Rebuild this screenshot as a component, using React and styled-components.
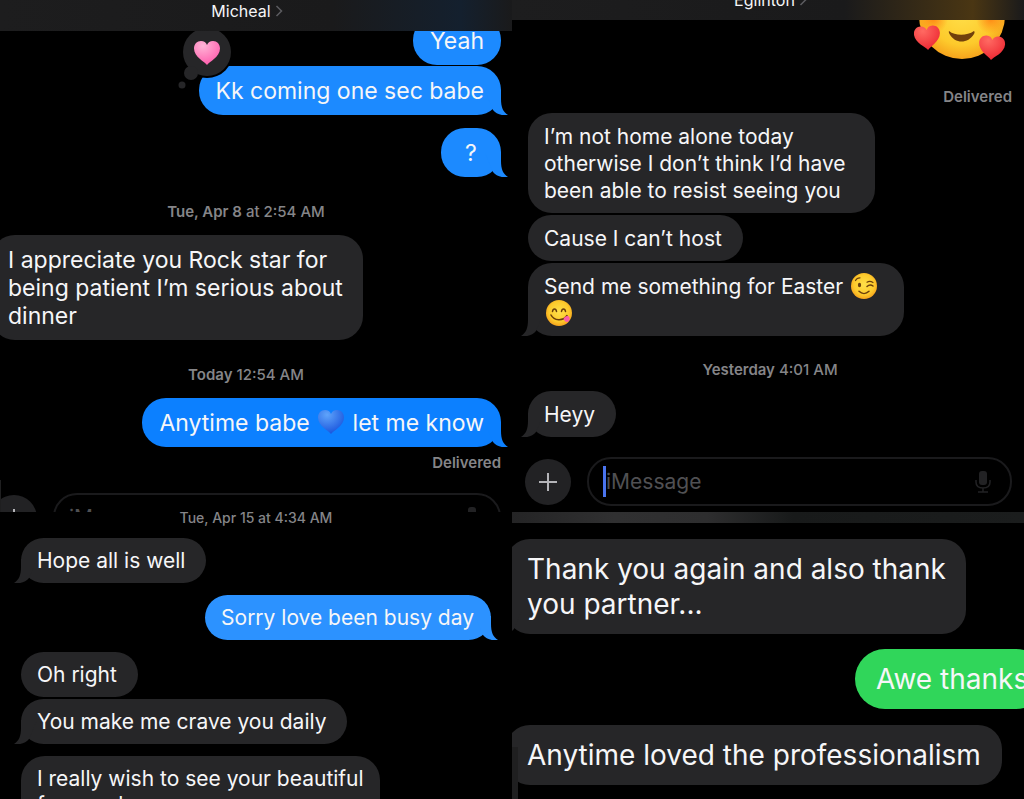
import React from "react";
import styled, { createGlobalStyle } from "styled-components";

const colors = {
  received: "#262628",
  sent: "#1c8aff",
  vivid: "#0c80ff",
  soft: "#2c92ff",
  sms: "#30d65a",
};

function Tail({ side, color }) {
  return (
    <TailSvg $side={side} viewBox="0 0 24 24" aria-hidden="true">
      <path d="M16 0V8C16 16 18 21 23 24C17 25 11 23 8 19L0 0Z" fill={color} />
    </TailSvg>
  );
}

function Message({ from = "them", color, tail, gap, width, children }) {
  const fill = color || (from === "me" ? colors.sent : colors.received);
  return (
    <Bubble $from={from} $color={fill} $gap={gap} $width={width}>
      {tail && <Tail side={from === "me" ? "right" : "left"} color={fill} />}
      {children}
    </Bubble>
  );
}

function Heart({ id, light, dark }) {
  return (
    <>
      <defs>
        <radialGradient id={id} cx="35%" cy="20%" r="80%">
          <stop offset="0" stopColor={light} />
          <stop offset="1" stopColor={dark} />
        </radialGradient>
      </defs>
      <path
        d="M13 24C11 21 0 16 0 7.500C0 3 3 0 7 0C10 0 12 1.500 13 4C14 1.500 16 0 19 0C23 0 26 3 26 7.500C26 16 15 21 13 24Z"
        fill={`url(#${id})`}
      />
    </>
  );
}

function Reaction() {
  return (
    <ReactionSvg viewBox="0 0 60 64" role="img" aria-label="Loved">
      <circle cx="29" cy="26" r="26" fill="#000" />
      <circle cx="29" cy="26" r="24" fill={colors.received} />
      <circle cx="13" cy="47" r="7" fill={colors.received} />
      <circle cx="4" cy="59" r="3.500" fill={colors.received} />
      <g transform="translate(16 15)">
        <Heart id="pinkHeart" light="#ffb4d6" dark="#ff5fae" />
      </g>
    </ReactionSvg>
  );
}

function FaceFill({ id }) {
  return (
    <radialGradient id={id} cx="50%" cy="45%" r="55%">
      <stop offset="0" stopColor="#ffe04a" />
      <stop offset="0.7" stopColor="#fdca2c" />
      <stop offset="1" stopColor="#f6a31c" />
    </radialGradient>
  );
}

function Wink() {
  return (
    <Emoji viewBox="0 0 26 26" role="img" aria-label="😉">
      <defs>
        <FaceFill id="wink" />
      </defs>
      <circle cx="13" cy="13" r="13" fill="url(#wink)" />
      <g fill="none" stroke="#6b3f0c" strokeLinecap="round">
        <path d="M4.500 7.500C5.500 5.500 7 4.800 9 4.800" strokeWidth="1.200" />
        <path d="M16 9.200C18 8 20 8.200 22 9.500" strokeWidth="1.200" />
        <path d="M16 13.500C18 11.600 20.500 11.800 22 13" strokeWidth="1.500" />
        <path d="M8 18.300C11 21.200 15 21.200 18 18.300" strokeWidth="1.500" />
      </g>
      <ellipse cx="8.500" cy="12" rx="1.600" ry="2.300" fill="#6b3f0c" />
    </Emoji>
  );
}

function Yum() {
  return (
    <Emoji viewBox="0 0 26 26" role="img" aria-label="😋">
      <defs>
        <FaceFill id="yum" />
      </defs>
      <circle cx="13" cy="13" r="13" fill="url(#yum)" />
      <g fill="none" stroke="#6b3f0c" strokeWidth="1.500" strokeLinecap="round">
        <path d="M6.500 11.500C7 8 10 8 10.500 11.500" />
        <path d="M15.500 11.500C16 8 19 8 19.500 11.500" />
        <path d="M5 15C8 20.800 17 21.500 21 15.500" />
      </g>
      <path
        d="M17.500 19C19 16 21 15.500 22.800 16.500C24.500 18 23.500 21.500 21 22C19.500 22 18 20.500 17.500 19Z"
        fill="#fb5ba8"
      />
    </Emoji>
  );
}

function BlueHeart() {
  return (
    <Emoji viewBox="0 0 26 26" role="img" aria-label="💙">
      <Heart id="blueHeart" light="#5fa4fb" dark="#1a55dd" />
    </Emoji>
  );
}

function BigLoveFace() {
  return (
    <LoveFace viewBox="0 0 92 92" role="img" aria-label="🥰">
      <defs>
        <FaceFill id="love" />
        <radialGradient id="cheek">
          <stop offset="0" stopColor="#ff7a10" stopOpacity="0.800" />
          <stop offset="1" stopColor="#ff7a10" stopOpacity="0" />
        </radialGradient>
      </defs>
      <circle cx="48" cy="43" r="43" fill="url(#love)" />
      <circle cx="19" cy="46" r="15" fill="url(#cheek)" />
      <circle cx="77" cy="46" r="15" fill="url(#cheek)" />
      <path
        d="M35 58C41 63 53 63 60 58C61 59 60.500 60 60 61C54 71 41 71 35.500 61C35 60 34.500 59 35 58Z"
        fill="#71410c"
      />
      <g transform="rotate(-4 13 62) translate(0 53)">
        <Heart id="redHeartA" light="#ff6a62" dark="#ee2a34" />
      </g>
      <g transform="rotate(4 78 72) translate(65 63)">
        <Heart id="redHeartB" light="#ff6a62" dark="#ee2a34" />
      </g>
    </LoveFace>
  );
}

function Chevron() {
  return (
    <ChevronSvg viewBox="0 0 8 12" aria-hidden="true">
      <path d="M1.500 1L6.500 6L1.500 11" fill="none" stroke="#5c5c60" strokeWidth="1.500" />
    </ChevronSvg>
  );
}

function Composer({ id, active }) {
  return (
    <ComposerRow>
      <PlusButton type="button" aria-label="Add attachment">
        <svg width="20" height="20" viewBox="0 0 20 20" aria-hidden="true">
          <path d="M10 1V19M1 10H19" stroke="#b4b4b8" strokeWidth="2" />
        </svg>
      </PlusButton>
      <Field htmlFor={id}>
        {active && <Caret />}
        <TextInput id={id} type="text" placeholder="iMessage" aria-label="iMessage" />
        <svg width="18" height="24" viewBox="0 0 18 24" aria-hidden="true">
          <rect x="5" y="1" width="8" height="14" rx="3" fill="#222224" />
          <path
            d="M2 10V12C2 16 5 18 9 18S16 16 16 12V10M9 18V22M4 22H14"
            fill="none"
            stroke="#222224"
            strokeWidth="1.500"
          />
        </svg>
      </Field>
    </ComposerRow>
  );
}

function MichealChat() {
  return (
    <Panel $size={23} $line={28} $pad="11px 17px 10px">
      <Header $height={31} $glow="#14202e" $shift={18}>
        <Title type="button">
          Micheal <Chevron />
        </Title>
      </Header>
      <Thread $inset="0 11px" $shift={-20}>
        <Message from="me" gap={-15}>
          Yeah
        </Message>
        <Message from="me" gap={1} tail>
          <Reaction />
          Kk coming one sec babe
        </Message>
        <Message from="me" gap={13} tail>
          ?
        </Message>
        <Stamp $gap={25}>
          <b>Tue, Apr 8</b> at 2:54 AM
        </Stamp>
        <Message gap={13} width={372}>
          I appreciate you Rock star for being patient I’m serious about dinner
        </Message>
        <Stamp $gap={25}>
          <b>Today</b> 12:54 AM
        </Stamp>
        <Message from="me" gap={13} color={colors.vivid} tail>
          Anytime babe <BlueHeart /> let me know
        </Message>
        <Status $gap={6}>Delivered</Status>
        <Peek>
          <Composer id="micheal-message" />
        </Peek>
      </Thread>
      <Sliver $width={1} $height={32} />
    </Panel>
  );
}

function EglintonChat() {
  return (
    <Panel $size={21} $line={27} $pad="10px 16px 9px">
      <Header $height={20} $glow="#4a3613" $shift={-5}>
        <Title type="button">
          Eglinton <Chevron />
        </Title>
      </Header>
      <Thread $inset="0 12px 6px 16px">
        <BigLoveFace />
        <Status $gap={22}>Delivered</Status>
        <Message gap={6} width={347}>
          I’m not home alone today otherwise I don’t think I’d have been able to resist seeing you
        </Message>
        <Message gap={2}>Cause I can’t host</Message>
        <Message gap={2} width={376} tail>
          Send me something for Easter <Wink /> <Yum />
        </Message>
        <Stamp $gap={24}>
          <b>Yesterday</b> 4:01 AM
        </Stamp>
        <Message gap={11} tail>
          Heyy
        </Message>
        <Gap />
        <Composer id="eglinton-message" active />
      </Thread>
    </Panel>
  );
}

function DailyChat() {
  return (
    <Panel $size={21} $line={26} $pad="10px 16px 9px">
      <Thread $inset="0 21px">
        <Stamp $gap={-4} $size={14}>
          Tue, Apr 15 at 4:34 AM
        </Stamp>
        <Message gap={10} tail>
          Hope all is well
        </Message>
        <Message from="me" gap={12} color={colors.soft} tail>
          Sorry love been busy day
        </Message>
        <Message gap={12}>Oh right</Message>
        <Message gap={2} tail>
          You make me crave you daily
        </Message>
        <Message gap={12} width={359}>
          I really wish to see your beautiful face and
        </Message>
      </Thread>
    </Panel>
  );
}

function PartnerChat() {
  return (
    <Panel $size={28} $line={35} $pad="13px 21px 12px">
      <Strip />
      <WideThread>
        <Message gap={16} width={460} tail>
          Thank you again and also thank you partner...
        </Message>
        <Message from="me" gap={15} width={191} color={colors.sms}>
          Awe thanks
        </Message>
        <Message gap={16}>Anytime loved the professionalism</Message>
      </WideThread>
      <Sliver $width={6} $height={52} />
    </Panel>
  );
}

function App() {
  return (
    <>
      <GlobalStyle />
      <Collage>
        <MichealChat />
        <EglintonChat />
        <DailyChat />
        <PartnerChat />
      </Collage>
    </>
  );
}

const GlobalStyle = createGlobalStyle`
  * {
    box-sizing: border-box;
  }
  body {
    margin: 0;
    background: #000;
    font-family: Inter, "Liberation Sans", sans-serif;
  }
`;

const Collage = styled.main`
  display: grid;
  grid-template-columns: 1fr 1fr;
  grid-template-rows: auto minmax(0, 1fr);
  height: 100vh;
  overflow: hidden;
`;

const Panel = styled.section`
  --bubble-pad: ${(p) => p.$pad};
  position: relative;
  min-width: 0;
  overflow: hidden;
  background: #000;
  color: #f6f6f8;
  font-size: ${(p) => p.$size}px;
  line-height: ${(p) => p.$line}px;
`;

const Header = styled.header`
  position: relative;
  z-index: 1;
  display: flex;
  align-items: flex-end;
  justify-content: center;
  height: ${(p) => p.$height}px;
  padding-bottom: 10px;
  padding-right: ${(p) => Math.max(p.$shift, 0)}px;
  padding-left: ${(p) => Math.max(-p.$shift, 0)}px;
  background: linear-gradient(90deg, #1d1d1e, #1a1a1b 65%, ${(p) => p.$glow} 90%, #1a1a1b);
`;

const Title = styled.button`
  display: flex;
  align-items: center;
  gap: 4px;
  padding: 0;
  border: 0;
  background: none;
  color: #f6f6f8;
  font: 400 16px/20px Inter, "Liberation Sans", sans-serif;
`;

const ChevronSvg = styled.svg`
  width: 8px;
  height: 12px;
`;

const Thread = styled.div`
  display: flex;
  flex-direction: column;
  margin-left: ${(p) => p.$shift || 0}px;
  padding: ${(p) => p.$inset};
`;

const WideThread = styled(Thread)`
  margin: 0 -22px 0 -6px;
`;

const Bubble = styled.div`
  position: relative;
  align-self: ${(p) => (p.$from === "me" ? "flex-end" : "flex-start")};
  width: ${(p) => (p.$width ? `${p.$width}px` : "auto")};
  min-width: 60px;
  margin-top: ${(p) => p.$gap}px;
  padding: var(--bubble-pad);
  padding-right: ${(p) => (p.$from === "me" ? 17 : p.$width ? 12 : 21)}px;
  border-radius: ${(p) => (p.$color === colors.sms ? 30 : 24)}px;
  background: ${(p) => p.$color};
  text-align: ${(p) => (p.$from === "me" && !p.$width ? "center" : "left")};
`;

const TailSvg = styled.svg`
  position: absolute;
  bottom: 0;
  ${(p) => p.$side}: -8px;
  width: 24px;
  height: 24px;
  transform: ${(p) => (p.$side === "left" ? "scaleX(-1)" : "none")};
`;

const ReactionSvg = styled.svg`
  position: absolute;
  top: -40px;
  left: -21px;
  width: 60px;
  height: 64px;
`;

const Emoji = styled.svg`
  width: 26px;
  height: 26px;
  margin: 0 2px;
  vertical-align: -5px;
`;

const LoveFace = styled.svg`
  align-self: flex-end;
  width: 92px;
  height: 92px;
  margin-top: -47px;
  margin-right: 6px;
`;

const Stamp = styled.time`
  align-self: center;
  margin-top: ${(p) => p.$gap}px;
  color: #858588;
  font-size: ${(p) => p.$size || 15}px;
  font-weight: 500;
  line-height: 20px;

  b {
    font-weight: 600;
  }
`;

const Status = styled.div`
  align-self: flex-end;
  margin-top: ${(p) => p.$gap}px;
  color: #858588;
  font-size: 15px;
  font-weight: 600;
  line-height: 20px;
`;

const Gap = styled.div`
  height: 20px;
`;

const Peek = styled.div`
  height: 19px;
  margin-top: 20px;
  margin-left: 3px;
  overflow: hidden;
`;

const ComposerRow = styled.div`
  display: flex;
  align-items: center;
  gap: 16px;
  margin-left: -3px;
`;

const PlusButton = styled.button`
  display: flex;
  align-items: center;
  justify-content: center;
  width: 46px;
  height: 46px;
  padding: 0;
  border: 0;
  border-radius: 50%;
  background: #222224;
`;

const Field = styled.label`
  display: flex;
  flex: 1;
  align-items: center;
  min-width: 0;
  height: 49px;
  padding: 0 18px 0 14px;
  border: 2px solid #1a1a1c;
  border-radius: 24px;
`;

const Caret = styled.span`
  width: 3px;
  height: 31px;
  background: #4a74ee;
`;

const TextInput = styled.input`
  flex: 1;
  min-width: 0;
  padding: 0;
  border: 0;
  outline: none;
  background: none;
  color: #f6f6f8;
  font: 400 21px/28px Inter, "Liberation Sans", sans-serif;

  &::placeholder {
    color: #505053;
    opacity: 1;
  }
`;

const Strip = styled.div`
  height: 11px;
  background: linear-gradient(90deg, #242425, #303031 20%, #2e2e2f 38%, #181a1a 55%, #1b1d1d);
`;

/* edge of the neighbouring chat that shows at the bottom left */
const Sliver = styled.div`
  position: absolute;
  bottom: 0;
  left: 0;
  width: ${(p) => p.$width}px;
  height: ${(p) => p.$height}px;
  background: #1f1f20;
`;

export default App;
